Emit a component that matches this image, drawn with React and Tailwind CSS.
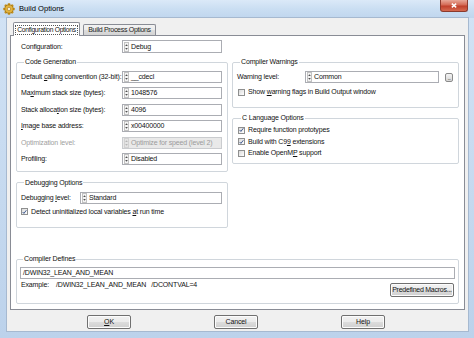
import React from 'react';

// Win7 "Build Options" dialog

function GearIcon() {
  return (
    <svg width="12" height="12" viewBox="0 0 12 12" className="shrink-0">
      <g transform="translate(6 6)">
        {[0, 45, 90, 135].map((a) => (
          <rect key={a} x="-1.3" y="-5.7" width="2.6" height="11.4" rx="0.6" fill="#c38f1c" transform={`rotate(${a})`} />
        ))}
        <circle r="4.1" fill="#e6b53a" stroke="#94690f" strokeWidth="0.6" />
        <circle r="1.7" fill="#f4ecd4" stroke="#94690f" strokeWidth="0.5" />
      </g>
    </svg>
  );
}

function Spin({ disabled }) {
  const c = disabled ? '#b5b5b5' : '#4d4d4d';
  return (
    <svg width="5" height="10" viewBox="0 0 5 10" className="shrink-0">
      <rect x="0.5" y="0.5" width="4" height="9" fill={disabled ? '#e4e4e4' : '#f3f3f3'} stroke={disabled ? '#d2d2d2' : '#c2c2c2'} />
      <path d="M1.2 4 L2.5 2.2 L3.8 4 Z" fill={c} />
      <path d="M1.2 6 L2.5 7.8 L3.8 6 Z" fill={c} />
    </svg>
  );
}

function Field({ value, disabled, className = '' }) {
  return (
    <div
      className={`flex items-center h-[12px] border pl-[1px] ${
        disabled ? 'border-[#cacccf] bg-[#e9e9e9] text-[#9b9b9b]' : 'border-[#abadb3] bg-white'
      } ${className}`}
    >
      <Spin disabled={disabled} />
      <span className="ml-[2px] whitespace-nowrap">{value}</span>
    </div>
  );
}

function Check({ on }) {
  return (
    <span className="w-[7px] h-[7px] border border-[#8e8f8f] bg-linear-to-br from-[#dadada] to-white flex items-center justify-center shrink-0">
      {on && (
        <svg width="6" height="6" viewBox="0 0 6 6">
          <path d="M0.8 3 L2.3 4.7 L5.2 0.9" stroke="#2f4b84" strokeWidth="1.1" fill="none" />
        </svg>
      )}
    </span>
  );
}

function CheckRow({ on, children, className = '' }) {
  return (
    <div className={`flex items-center h-[8px] gap-[3px] ${className}`}>
      <Check on={on} />
      <span className="whitespace-nowrap">{children}</span>
    </div>
  );
}

function Group({ title, className = '', children }) {
  return (
    <fieldset className={`border border-[#d0d6dc] rounded-[2px] min-w-0 ${className}`}>
      <legend className="ml-[3px] px-[1px] leading-[10px]">{title}</legend>
      {children}
    </fieldset>
  );
}

function Row({ label, value, disabled }) {
  return (
    <div className="flex items-center h-[12px]">
      <span className={`w-[101px] shrink-0 whitespace-nowrap ${disabled ? 'text-[#a0a0a0]' : ''}`}>{label}</span>
      <Field value={value} disabled={disabled} className="w-[100px]" />
    </div>
  );
}

function Button({ children, className = '' }) {
  return (
    <button
      className={`h-[14px] rounded-[2px] border border-[#707070] bg-[linear-gradient(#f2f2f2,#ebebeb_50%,#dddddd_50%,#cfcfcf)] shadow-[inset_0_0_0_1px_#fcfcfc] flex items-center justify-center leading-[8px] whitespace-nowrap ${className}`}
    >
      {children}
    </button>
  );
}

export default function App() {
  return (
    <div className="w-[474px] h-[338px] flex flex-col bg-linear-to-b from-[#d2e3f5] to-[#bcd2eb] text-[7px] leading-[8px] tracking-[-0.15px] text-[#111] font-['Liberation_Sans',Arial,sans-serif] overflow-hidden">
      {/* title bar */}
      <div className="h-[18px] shrink-0 flex items-start bg-linear-to-b from-[#dbe9f8] via-[#cadef2] to-[#c0d6ee]">
        <div className="flex items-center gap-[4px] pl-[3px] pt-[3px]">
          <GearIcon />
          <span className="text-[7.6px] tracking-normal text-black">Build Options</span>
        </div>
        <div className="ml-auto mr-[6px] w-[28px] h-[12px] rounded-b-[3px] border border-t-0 border-[#8b3a2d] bg-[linear-gradient(#e8a898,#d46a55_45%,#c0402b_55%,#d66a50)] flex items-center justify-center">
          <svg width="6" height="5" viewBox="0 0 6 5">
            <path d="M0.8 0.6 L5.2 4.4 M5.2 0.6 L0.8 4.4" stroke="white" strokeWidth="1.4" />
          </svg>
        </div>
      </div>

      {/* dialog body */}
      <div className="ml-[7px] w-[461px] h-[313px] shrink-0 bg-[#f0f0f0] shadow-[0_0_0_1px_#a6b9d0] flex flex-col">
        {/* tabs */}
        <div className="mt-[4px] h-[13px] flex items-end pl-[6px]">
          <div className="relative z-10 -mb-px w-[67px] h-[14px] border border-b-0 border-[#898c95] bg-white rounded-t-[2px] flex items-center justify-center">
            <span className="border border-dotted border-[#555] px-[1px] leading-[8px] whitespace-nowrap text-[6.7px] tracking-[-0.3px]">Configuration Options</span>
          </div>
          <div className="ml-[3px] w-[73px] h-[11px] border border-b-0 border-[#898c95] rounded-t-[2px] bg-[linear-gradient(#f3f3f3,#ebebeb_50%,#dedede_50%,#d2d2d2)] flex items-center justify-center whitespace-nowrap tracking-[-0.3px] text-[#222]">
            Build Process Options
          </div>
        </div>

        {/* tab panel */}
        <div className="ml-[3px] w-[455px] h-[275px] shrink-0 border border-[#898c95] bg-white flex flex-col px-[5px]">
          <div className="mt-[4px] flex items-center h-[13px] pl-[5px]">
            <span className="w-[101px] shrink-0">Configuration:</span>
            <Field value="Debug" className="w-[100px] h-[13px]" />
          </div>

          <div className="mt-[4px] flex gap-[4px]">
            {/* left column */}
            <div className="w-[212px] shrink-0 flex flex-col">
              <Group title="Code Generation" className="pl-[4px] pr-[5px] pt-[4px] pb-[6px]">
                <div className="flex flex-col gap-[4.4px]">
                  <Row label={<>Default <u>c</u>alling convention (32-bit):</>} value="__cdecl" />
                  <Row label={<>Ma<u>x</u>imum stack size (bytes):</>} value="1048576" />
                  <Row label={<>Stack alloca<u>t</u>ion size (bytes):</>} value="4096" />
                  <Row label={<><u>I</u>mage base address:</>} value="x00400000" />
                  <Row label="Optimization level:" value="Optimize for speed (level 2)" disabled />
                  <Row label="Profiling:" value="Disabled" />
                </div>
              </Group>

              <Group title="Debugging Options" className="mt-[6px] pl-[4px] pr-[5px] pt-[4px] pb-[11px]">
                <div className="flex items-center h-[12px]">
                  <span className="w-[59px] shrink-0 whitespace-nowrap">Debugging <u>l</u>evel:</span>
                  <Field value="Standard" className="w-[142px]" />
                </div>
                <CheckRow on className="mt-[4px]">
                  Detect uninitialized local variables <u>a</u>t run time
                </CheckRow>
              </Group>
            </div>

            {/* right column */}
            <div className="flex-1 flex flex-col">
              <Group title="Compiler Warnings" className="pl-[4px] pr-[4px] pt-[4px] pb-[11px]">
                <div className="flex items-center h-[12px]">
                  <span className="w-[68px] shrink-0">Warning level:</span>
                  <Field value="Common" className="w-[134px]" />
                  <div className="ml-[6px] w-[8px] h-[9px] rounded-[2px] border border-[#8a8a8a] bg-linear-to-b from-[#f4f4f4] to-[#d6d6d6] flex items-end justify-center pb-[1px]">
                    <span className="text-[5px] leading-[4px] tracking-[-0.5px]">...</span>
                  </div>
                </div>
                <CheckRow className="mt-[5px] pl-[1px]">
                  Show <u>w</u>arning flags in Build Output window
                </CheckRow>
              </Group>

              <Group title="C Language Options" className="mt-[5px] pl-[5px] pr-[4px] pt-[3px] pb-[6px]">
                <div className="flex flex-col gap-[3.5px]">
                  <CheckRow on>Require function prototypes</CheckRow>
                  <CheckRow on>Build with C9<u>9</u> extensions</CheckRow>
                  <CheckRow>Enable OpenM<u>P</u> support</CheckRow>
                </div>
              </Group>
            </div>
          </div>

          <Group title="Compiler Defines" className="mt-auto mb-[5px] px-[3px] pt-[3px] pb-[6px]">
            <div className="h-[12px] border border-[#abadb3] bg-white flex items-center pl-[2px]">/DWIN32_LEAN_AND_MEAN</div>
            <div className="mt-[2px] flex items-start justify-between pl-[1px]">
              <div className="flex whitespace-nowrap">
                <span>Example:</span>
                <span className="ml-[7px]">/DWIN32_LEAN_AND_MEAN</span>
                <span className="ml-[5px]">/DCONTVAL=4</span>
              </div>
              <Button className="mt-[2px] w-[64px] mr-[1px] tracking-[-0.25px]">Predefined Macros...</Button>
            </div>
          </Group>
        </div>

        {/* dialog buttons */}
        <div className="mt-[5px] flex pl-[80px] gap-[83px]">
          <Button className="w-[44px]"><u>O</u>K</Button>
          <Button className="w-[44px]">Cancel</Button>
          <Button className="w-[44px]">Help</Button>
        </div>
      </div>
    </div>
  );
}
